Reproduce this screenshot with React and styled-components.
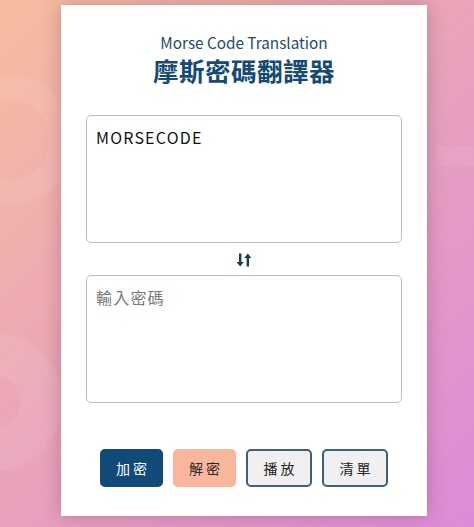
import React, { useState } from "react";
import styled, { createGlobalStyle } from "styled-components";

const GlobalStyle = createGlobalStyle`
  * { box-sizing: border-box; }
  html, body {
    margin: 0;
    padding: 0;
  }
  body {
    min-height: 527px;
    font-family: "Noto Sans CJK TC", "Noto Sans", sans-serif;
    background:
      radial-gradient(circle at 10px 140px, transparent 0 39px, rgba(255, 255, 255, 0.07) 40px 64px, transparent 65px),
      radial-gradient(circle at -6px 402px, transparent 0 26px, rgba(255, 255, 255, 0.07) 27px 68px, transparent 69px),
      linear-gradient(rgba(255, 255, 255, 0.06), rgba(255, 255, 255, 0.06)) 436px 146px / 40px 20px no-repeat,
      linear-gradient(135deg, #f7bd9f 0%, #eaa5b8 45%, #dc8bd9 100%);
  }
`;

const Page = styled.div`
  display: flex;
  justify-content: center;
  padding: 5px 0 0 14px;
  height: 527px;
`;

const Card = styled.main`
  width: 366px;
  height: 511px;
  background: #ffffff;
  box-shadow: 0 0 18px rgba(90, 40, 60, 0.3);
  padding: 28px 25px 0;
  display: flex;
  flex-direction: column;
`;

const SubTitle = styled.p`
  margin: 0;
  text-align: center;
  font-size: 15.3px;
  line-height: 18px;
  color: #1f4a70;
`;

const Title = styled.h1`
  margin: 0;
  text-align: center;
  font-size: 25.5px;
  line-height: 38px;
  font-weight: 700;
  color: #144a75;
  letter-spacing: 0.5px;
`;

const TextBox = styled.textarea`
  display: block;
  width: 316px;
  height: 128px;
  margin-top: ${(p) => p.$top || 0}px;
  resize: none;
  border: 1.5px solid #bfbfbf;
  border-radius: 5px;
  padding: 9px 9px;
  font-family: "Noto Sans CJK TC", "Noto Sans", sans-serif;
  font-size: 16px;
  line-height: 24px;
  letter-spacing: 1.2px;
  color: #111;
  outline: none;

  &::placeholder {
    color: #7a7a7a;
  }
`;

const SwapRow = styled.div`
  height: 32px;
  display: flex;
  align-items: center;
  justify-content: center;
  padding-top: 2px;
  color: #1d3a5c;
`;

const ButtonRow = styled.div`
  display: flex;
  justify-content: center;
  gap: 10px;
  margin-top: 46px;
`;

const variants = {
  primary: { bg: "#0f4a78", color: "#ffffff", border: "#0f4a78" },
  accent: { bg: "#f9b69c", color: "#2a2a2a", border: "#f9b69c" },
  outline: { bg: "#f0f0f0", color: "#222222", border: "#3e5f80" },
};

const Button = styled.button`
  height: 38px;
  width: ${(p) => (p.$variant === "outline" ? 66 : 63)}px;
  border-radius: 5px;
  border: ${(p) => (p.$variant === "outline" ? 2 : 0)}px solid
    ${(p) => variants[p.$variant].border};
  background: ${(p) => variants[p.$variant].bg};
  color: ${(p) => variants[p.$variant].color};
  font-family: "Noto Sans CJK TC", "Noto Sans", sans-serif;
  font-size: 14px;
  letter-spacing: 3px;
  padding: 0 0 0 3px;
  cursor: pointer;
`;

function SwapIcon() {
  return (
    <svg width="16" height="14" viewBox="0 0 16 14" fill="currentColor">
      <rect x="3" y="0.5" width="2.4" height="10" />
      <path d="M0.6 9 L7.8 9 L4.2 13.5 Z" />
      <rect x="10.6" y="3.5" width="2.4" height="10" />
      <path d="M8.2 5 L15.4 5 L11.8 0.5 Z" />
    </svg>
  );
}

export default function App() {
  const [plain, setPlain] = useState("MORSECODE");
  const [code, setCode] = useState("");

  return (
    <>
      <GlobalStyle />
      <Page>
        <Card>
          <SubTitle>Morse Code Translation</SubTitle>
          <Title>摩斯密碼翻譯器</Title>
          <TextBox
            $top={26}
            value={plain}
            onChange={(e) => setPlain(e.target.value)}
          />
          <SwapRow>
            <SwapIcon />
          </SwapRow>
          <TextBox
            placeholder="輸入密碼"
            value={code}
            onChange={(e) => setCode(e.target.value)}
          />
          <ButtonRow>
            <Button $variant="primary">加密</Button>
            <Button $variant="accent">解密</Button>
            <Button $variant="outline">播放</Button>
            <Button $variant="outline">清單</Button>
          </ButtonRow>
        </Card>
      </Page>
    </>
  );
}
